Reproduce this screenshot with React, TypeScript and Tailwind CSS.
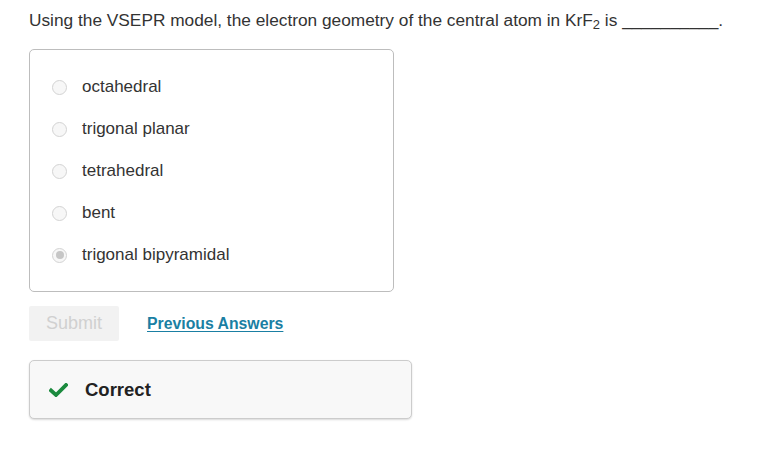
import React from 'react';

const options = ['octahedral', 'trigonal planar', 'tetrahedral', 'bent', 'trigonal bipyramidal'];

const Radio: React.FC<{ checked?: boolean }> = ({ checked }) => (
  <span className="w-[15px] h-[15px] rounded-full border border-[#d3d3d3] bg-[#f7f7f7] flex items-center justify-center shrink-0">
    {checked && <span className="w-[8px] h-[8px] rounded-full bg-[#c6c6c6]"></span>}
  </span>
);

export default function App() {
  const selected = 'trigonal bipyramidal';

  return (
    <div className="min-h-screen bg-white pl-[29px] pt-[10px] text-[#333] font-['Liberation_Sans',Arial,sans-serif]">
      <p className="text-[17.3px] leading-[20px]">
        Using the VSEPR model, the electron geometry of the central atom in KrF<sub>2</sub> is __________.
      </p>

      <div className="mt-[19px] w-[365px] h-[243px] border border-[#bdbdbd] rounded-[5px] pt-[16px] pb-[16px]">
        {options.map(o => (
          <label key={o} className="h-[42px] flex items-center pl-[22px]">
            <Radio checked={o === selected} />
            <span className="ml-[15px] text-[17px]">{o}</span>
          </label>
        ))}
      </div>

      <div className="mt-[14px] flex items-center">
        <button disabled className="w-[90px] h-[35px] bg-[#f2f2f2] text-[#d0d0d0] text-[18px] text-left pl-[17px] rounded-[2px]">
          Submit
        </button>
        <a className="ml-[28px] text-[15.8px] font-bold text-[#1a7fa3] underline underline-offset-2 cursor-pointer">
          Previous Answers
        </a>
      </div>

      <div className="mt-[19px] w-[383px] h-[59px] bg-[#f8f8f8] border border-[#cccccc] rounded-[5px] shadow-[0_1px_2px_rgba(0,0,0,0.15)] flex items-center pl-[19px]">
        <svg width="19" height="14" viewBox="0 0 19 14" className="shrink-0">
          <path d="M2 7.5 L7 12 L17 2" fill="none" stroke="#1b8a3e" strokeWidth="3.8" strokeLinecap="square" />
        </svg>
        <span className="ml-[17px] text-[18.5px] font-bold text-[#222]">Correct</span>
      </div>
    </div>
  );
}
